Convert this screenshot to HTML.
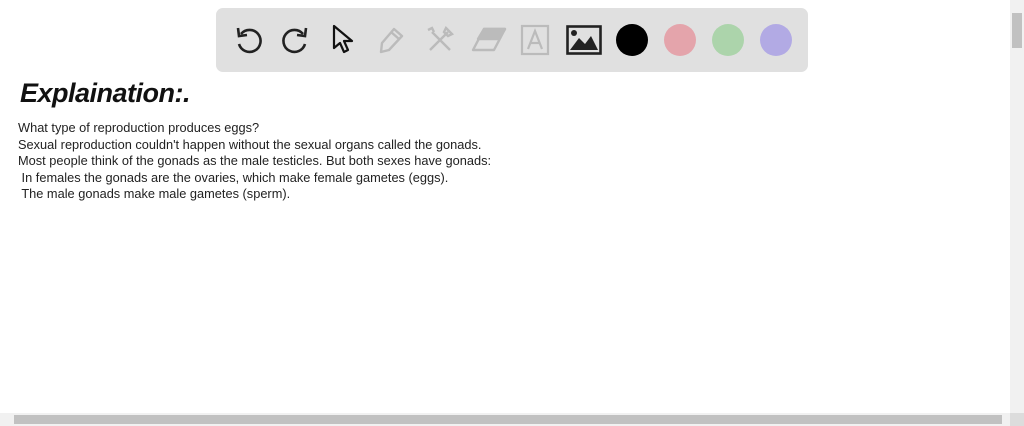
<!DOCTYPE html>
<html><head><meta charset="utf-8"><style>
html,body{margin:0;padding:0}
body{width:1024px;height:426px;overflow:hidden;background:#fff;position:relative;font-family:"Liberation Sans",Arial,sans-serif}
.tb{position:absolute;left:216px;top:8px;width:592px;height:64px;background:#e0e0e0;border-radius:7px}
.tb svg{position:absolute}
.c{position:absolute;top:16px;width:32px;height:32px;border-radius:50%}
.title{position:absolute;left:20px;top:78px;font-size:27px;font-weight:bold;font-style:italic;color:#111;letter-spacing:-0.5px}
.txt{position:absolute;left:18px;top:120px;font-size:12.8px;line-height:16.5px;color:#222;white-space:pre}
.vs{position:absolute;left:1010px;top:0;width:14px;height:413px;background:#f1f1f1}
.vt{position:absolute;left:1012px;top:13px;width:10px;height:35px;background:#c1c1c1}
.hs{position:absolute;left:0;top:413px;width:1010px;height:13px;background:#f1f1f1}
.ht{position:absolute;left:14px;top:415px;width:988px;height:9px;background:#c1c1c1}
.cr{position:absolute;left:1010px;top:413px;width:14px;height:13px;background:#dcdcdc}
</style></head><body>
<div class="tb">
<svg style="left:16px;top:16px" width="34" height="34" viewBox="0 0 34 34" fill="none" stroke="#222" stroke-width="2.6"><path d="M9 10 A11 11 0 1 1 7 20"/><path d="M6 4 L7 12 L15 11"/></svg>
<svg style="left:62px;top:16px" width="34" height="34" viewBox="0 0 34 34" fill="none" stroke="#222" stroke-width="2.6"><path d="M25 10 A11 11 0 1 0 27 20"/><path d="M28 4 L27 12 L19 11"/></svg>
<svg style="left:114px;top:16px" width="26" height="32" viewBox="0 0 26 32" fill="none" stroke="#111" stroke-width="2.2" stroke-linejoin="round"><path d="M4 2 L22 17 L14 17 L18 26 L14 28 L10 19 L4 24 Z"/></svg>
<svg style="left:160px;top:17px" width="30" height="30" viewBox="0 0 30 30" fill="none" stroke="#bbb" stroke-width="2.4" stroke-linejoin="round"><path d="M18 4 L26 11 L13 25 L5 27 L6 18 Z M15 7 L23 14"/></svg>
<svg style="left:208px;top:16px" width="32" height="32" viewBox="0 0 32 32" fill="none" stroke="#bbb" stroke-width="2.4"><path d="M6 26 L24 8 M26 26 L8 8 M4 6 L8 4 L10 8 M22 4 L28 10 L24 12 L20 8 Z"/></svg>
<svg style="left:254px;top:18px" width="38" height="28" viewBox="0 0 38 28" fill="none" stroke="#bbb" stroke-width="2.4" stroke-linejoin="round"><path d="M14 3 L35 3 L24 24 L3 24 Z"/><path d="M14 3 L35 3 L29 13 L8 13 Z" fill="#bbb"/></svg>
<svg style="left:304px;top:16px" width="30" height="32" viewBox="0 0 30 32" fill="none" stroke="#bbb" stroke-width="2.2"><rect x="2" y="2" width="26" height="28"/><path d="M8 25 L15 7 L22 25 M10 19 L20 19"/></svg>
<svg style="left:350px;top:17px" width="36" height="30" viewBox="0 0 36 30"><rect x="1.5" y="1.5" width="33" height="27" fill="none" stroke="#222" stroke-width="2.6"/><circle cx="8" cy="8" r="3" fill="#222"/><path d="M4 25 L13 13 L19 19 L25 11 L32 25 Z" fill="#222"/></svg>
<div class="c" style="left:400px;background:#000"></div>
<div class="c" style="left:448px;background:#e4a4ab"></div>
<div class="c" style="left:496px;background:#acd4ab"></div>
<div class="c" style="left:544px;background:#b2aae4"></div>
</div>
<div class="title">Explaination:.</div>
<div class="txt">What type of reproduction produces eggs?
Sexual reproduction couldn't happen without the sexual organs called the gonads.
Most people think of the gonads as the male testicles. But both sexes have gonads:
 In females the gonads are the ovaries, which make female gametes (eggs).
 The male gonads make male gametes (sperm).</div>
<div class="vs"></div><div class="vt"></div>
<div class="hs"></div><div class="ht"></div><div class="cr"></div>
</body></html>
